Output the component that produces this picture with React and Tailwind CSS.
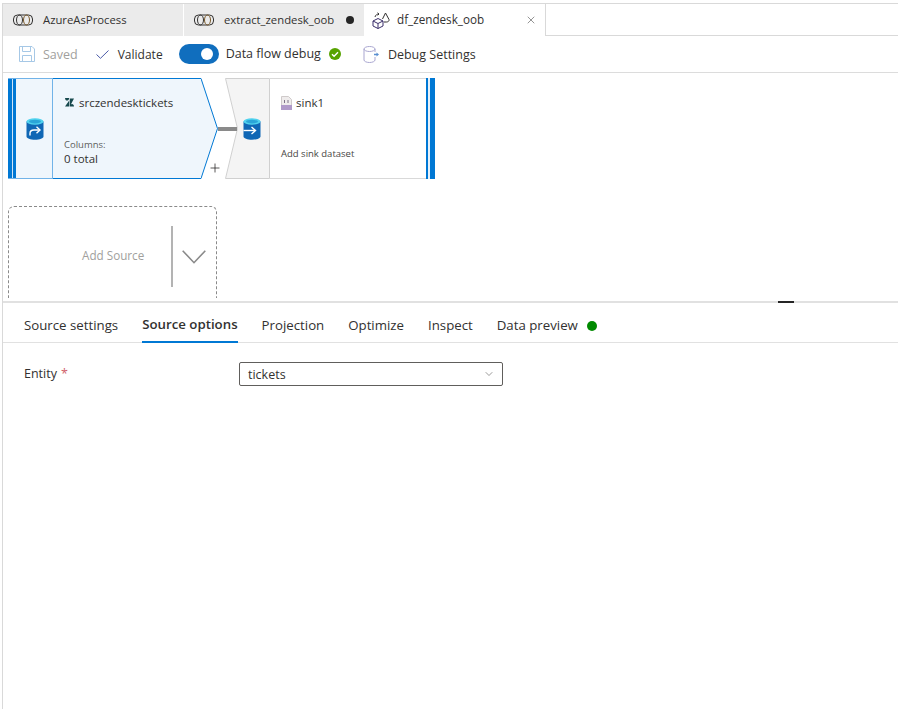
import { X, ChevronDown, Plus } from "lucide-react";

function PipelineIcon() {
  return (
    <svg width="20" height="12" viewBox="0 0 20 12" fill="none" className="shrink-0">
      <rect x="0.5" y="1" width="19" height="10" rx="4" stroke="#323130" />
      <ellipse cx="6.5" cy="6" rx="3" ry="5" stroke="#323130" />
      <ellipse cx="13.5" cy="6" rx="3" ry="5" stroke="#7a5a2a" />
    </svg>
  );
}

function DataFlowIcon() {
  return (
    <svg width="18" height="17" viewBox="0 0 18 17" fill="none" className="shrink-0">
      <path d="M1 9l5-2.5L11 9v5l-5 2.5L1 14V9z" stroke="#3b2f6b" />
      <path d="M1 9l5 2.5L11 9M6 11.5v5" stroke="#3b2f6b" />
      <path d="M10.5 7L13.5 1l3.5 6.5c.4 1.5-1 2.5-2.5 2.5H12" stroke="#323130" />
      <path d="M3 5c.5-2 2-3 4-3M7 2L5.5.8M7 2L5.6 3.4" stroke="#323130" />
    </svg>
  );
}

function SaveIcon() {
  return (
    <svg width="16" height="16" viewBox="0 0 16 16" fill="none" className="shrink-0">
      <path d="M.5.5h12.5l2.5 2.5v12.5H.5V.5z" stroke="#a6c8e6" />
      <path d="M3.5.5v5h8v-5M3.5 15.5v-6h9v6" stroke="#a6c8e6" />
    </svg>
  );
}

function DebugSettingsIcon() {
  return (
    <svg width="16" height="17" viewBox="0 0 16 17" fill="none" className="block shrink-0">
      <ellipse cx="6.5" cy="3" rx="5.5" ry="2.5" stroke="#a9a6d0" />
      <path d="M1 3v11c0 1.4 2.5 2.5 5.5 2.5S12 15.4 12 14v-3M12 3v3" stroke="#a9a6d0" />
      <path d="M11 8.5h3" stroke="#5a8fd0" strokeWidth="1.5" />
      <path d="M13.5 6.5L16 8.5l-2.5 2z" fill="#5a8fd0" />
    </svg>
  );
}

function CylinderIcon({ flip }) {
  return (
    <svg width="18" height="22" viewBox="0 0 18 22" fill="none" className="block shrink-0">
      <path d="M0.5 3.5v15c0 1.8 3.8 3.2 8.5 3.2s8.5-1.4 8.5-3.2v-15z" fill="#0f67b5" />
      <ellipse cx="9" cy="3.5" rx="8.5" ry="3.2" fill="#4fd2ee" />
      <ellipse cx="9" cy="3.6" rx="6" ry="1.8" fill="#2aa5d8" />
      {flip ? (
        <>
          <path d="M4 17.5v-2c0-2.4 1.6-3.5 4-3.5h5" stroke="#fff" strokeWidth="1.4" />
          <path d="M10.5 8.8L14 12l-3.5 3.2" stroke="#fff" strokeWidth="1.4" />
        </>
      ) : (
        <>
          <path d="M0.5 12.5H12" stroke="#fff" strokeWidth="1.4" />
          <path d="M8.5 9L12.5 12.5 8.5 16" stroke="#fff" strokeWidth="1.4" />
        </>
      )}
    </svg>
  );
}

function ZendeskIcon() {
  return (
    <svg width="9" height="9" viewBox="0 0 9 9" className="shrink-0">
      <path d="M0 0h4.2C4.2 1.6 3 2.6 2 2.6S0 1.6 0 0zM4.2 2.4V8.6H0zM4.8 8.6V.4H9zM4.8 8.6C4.8 7 6 6 7 6s2 1 2 2.6z" fill="#17494d" />
    </svg>
  );
}

function SinkFileIcon() {
  return (
    <svg width="11" height="14" viewBox="0 0 11 14" className="shrink-0">
      <path d="M.5.5h7l3 3v6h-10z" fill="#efecec" stroke="#cfcaca" />
      <path d="M3.5 4v3M7 4v3" stroke="#7d7288" />
      <rect y="9" width="11" height="5" fill="#b09ac9" />
    </svg>
  );
}

export default function App() {
  return (
    <div className="h-[709px] w-[898px] overflow-hidden bg-white pl-[2px] pt-[3px] font-['Open_Sans','Noto_Sans',sans-serif] text-[#323130]">
      <div className="flex h-[706px] flex-col border-l border-t border-[#d9d9d9]">
        {/* file tabs */}
        <div className="flex h-[32px] shrink-0">
          <div className="flex w-[180px] items-center gap-[10px] bg-[#ebebeb] pl-[10px] text-[11.3px]">
            <PipelineIcon />
            <span>AzureAsProcess</span>
          </div>
          <div className="ml-px flex w-[180px] items-center gap-[10px] bg-[#ebebeb] pl-[10px] text-[11.3px]">
            <PipelineIcon />
            <span>extract_zendesk_oob</span>
            <span className="ml-[2px] h-2 w-2 rounded-full bg-[#252525]"></span>
          </div>
          <div className="ml-px flex w-[181px] items-center gap-[7px] border-r border-[#d9d9d9] pl-[7px] text-[11.7px] font-medium">
            <DataFlowIcon />
            <span>df_zendesk_oob</span>
            <X size={12} strokeWidth={1.25} className="ml-auto mr-[8px] text-[#555]" />
          </div>
          <div className="flex-1 border-b border-[#d9d9d9]"></div>
        </div>

        {/* toolbar */}
        <div className="flex h-[37px] shrink-0 items-center border-b border-[#dcdcdc] pl-[16px] text-[12.5px]">
          <SaveIcon />
          <span className="ml-[8px] pt-[2px] text-[#a19f9d]">Saved</span>
          <svg width="13" height="9" viewBox="0 0 13 9" fill="none" className="ml-[18px] shrink-0">
            <path d="M.5 4.5L4.5 8.3 12.5.5" stroke="#4a5aa8" />
          </svg>
          <span className="ml-[9px] pt-[2px] text-[12px]">Validate</span>
          <div className="ml-[16px] flex h-[20px] w-[40px] items-center justify-end rounded-full bg-[#106ebe] pr-[6px]">
            <span className="h-3 w-3 rounded-full bg-white"></span>
          </div>
          <span className="ml-[7px] pt-[1px]">Data flow debug</span>
          <svg width="12" height="12" viewBox="0 0 12 12" className="ml-[8px] shrink-0">
            <circle cx="6" cy="6" r="6" fill="#57a300" />
            <path d="M3 6.2l2.1 2.1L9 4.2" stroke="#fff" strokeWidth="1.4" fill="none" />
          </svg>
          <span className="ml-[22px]"><DebugSettingsIcon /></span>
          <span className="ml-[9px] pt-[2px]">Debug Settings</span>
        </div>

        {/* canvas */}
        <div className="h-[228px] shrink-0 overflow-hidden pl-[5px] pt-[5px]">
          <div className="relative flex h-[101px] w-[427px] gap-[7px]">
            {/* source node */}
            <div className="flex w-[210px]">
              <div className="flex w-[45px] border border-l-0 border-[#71b3e8] bg-[#eff6fc]">
                <span className="h-full w-[4px] bg-[#0078d4]"></span>
                <span className="h-full w-px bg-[#cfe4f7]"></span>
                <span className="h-full w-[3px] bg-[#0078d4]"></span>
                <span className="flex flex-1 items-center justify-center pl-[1px]"><CylinderIcon flip /></span>
              </div>
              <div className="flex flex-1 flex-col border-y border-[#0078d4] bg-[#eff6fc] pl-[11px]">
                <div className="ml-[1px] mt-[15px] flex items-center gap-[5px] text-[11.5px] font-medium">
                  <ZendeskIcon />
                  <span>srczendesktickets</span>
                </div>
                <div className="mt-[27px] text-[9.5px] leading-[13px] text-[#605e5c]">Columns:</div>
                <div className="text-[11.5px] font-medium leading-[15px]">0 total</div>
              </div>
              <svg width="17" height="101" viewBox="0 0 17 101" className="shrink-0">
                <path d="M0 .5L16.5 50.5 0 100.5" fill="#eff6fc" stroke="#0078d4" />
              </svg>
            </div>

            {/* sink node */}
            <div className="flex w-[210px]">
              <div className="relative flex w-[45px] shrink-0 items-center justify-end pr-[9px]">
                <svg width="45" height="101" viewBox="0 0 45 101" className="absolute left-0 top-0">
                  <path d="M44.5 .5H.5L12.5 50.5 .5 100.5H44.5z" fill="#f4f4f4" stroke="#d0d0d0" />
                </svg>
                <span className="relative"><CylinderIcon /></span>
              </div>
              <div className="flex flex-1 flex-col border-y border-[#d9d9d9] bg-white pl-[11px]">
                <div className="mt-[15px] flex items-center gap-[4px] text-[11.5px] font-medium">
                  <SinkFileIcon />
                  <span>sink1</span>
                </div>
                <div className="mt-[36px] text-[9.5px] text-[#484644]">Add sink dataset</div>
              </div>
              <span className="h-full w-[2px] bg-[#0078d4]"></span>
              <span className="h-full w-[2px] bg-[#e6f1fa]"></span>
              <span className="h-full w-[5px] bg-[#0078d4]"></span>
            </div>

            {/* connector and plus sit over both nodes */}
            <span className="absolute left-[210px] top-[49px] h-[4px] w-[19px] bg-[#8a8a8a]"></span>
            <Plus size={14} strokeWidth={1.25} className="absolute left-[200px] top-[83px] text-[#1b1a19]" />
          </div>

          {/* add source */}
          <div className="mt-[27px] flex h-[92px] w-[209px] items-center rounded-t-[6px] border border-b-0 border-dashed border-[#8a8a8a] pt-[8px]">
            <span className="ml-[73px] pb-[2px] text-[11.7px] text-[#a19f9d]">Add Source</span>
            <span className="ml-[27px] h-[61px] w-[2px] bg-[#b3b3b3]"></span>
            <svg width="24" height="14" viewBox="0 0 24 14" fill="none" className="ml-[9px] shrink-0">
              <path d="M.7.7L12 12.7 23.3.7" stroke="#8a8a8a" strokeWidth="1.6" />
            </svg>
          </div>
        </div>

        {/* panel divider */}
        <div className="flex h-[2px] shrink-0 justify-end bg-[#e1e1e1] pr-[104px]">
          <span className="h-[2px] w-[16px] bg-[#252525]"></span>
        </div>

        {/* panel tabs */}
        <div className="flex h-[40px] shrink-0 gap-[24px] border-b border-[#e1e1e1] pl-[21px] text-[13.25px]">
          <span className="flex h-[40px] items-center pt-[6px]">Source settings</span>
          <span className="flex h-[40px] items-center border-b-2 border-[#0078d4] pt-[6px] font-semibold">Source options</span>
          <span className="flex h-[40px] items-center pt-[6px]">Projection</span>
          <span className="flex h-[40px] items-center pt-[6px]">Optimize</span>
          <span className="flex h-[40px] items-center pt-[6px]">Inspect</span>
          <span className="flex h-[40px] items-center gap-[9px] pt-[6px]">
            Data preview
            <span className="h-[10px] w-[10px] rounded-full bg-[#008a00]"></span>
          </span>
        </div>

        {/* entity field */}
        <div className="flex items-start pl-[21px] pt-[19px] text-[12.5px]">
          <div className="flex w-[215px] pt-[3px] font-medium">
            Entity <span className="ml-[4px] text-[#d0606a]">*</span>
          </div>
          <div className="flex h-[24px] w-[264px] items-center justify-between rounded-[2px] border border-[#605e5c] pl-[8px] pr-[7px]">
            <span className="pt-[3px]">tickets</span>
            <ChevronDown size={12} strokeWidth={1.1} className="text-[#484644]" />
          </div>
        </div>
      </div>
    </div>
  );
}
